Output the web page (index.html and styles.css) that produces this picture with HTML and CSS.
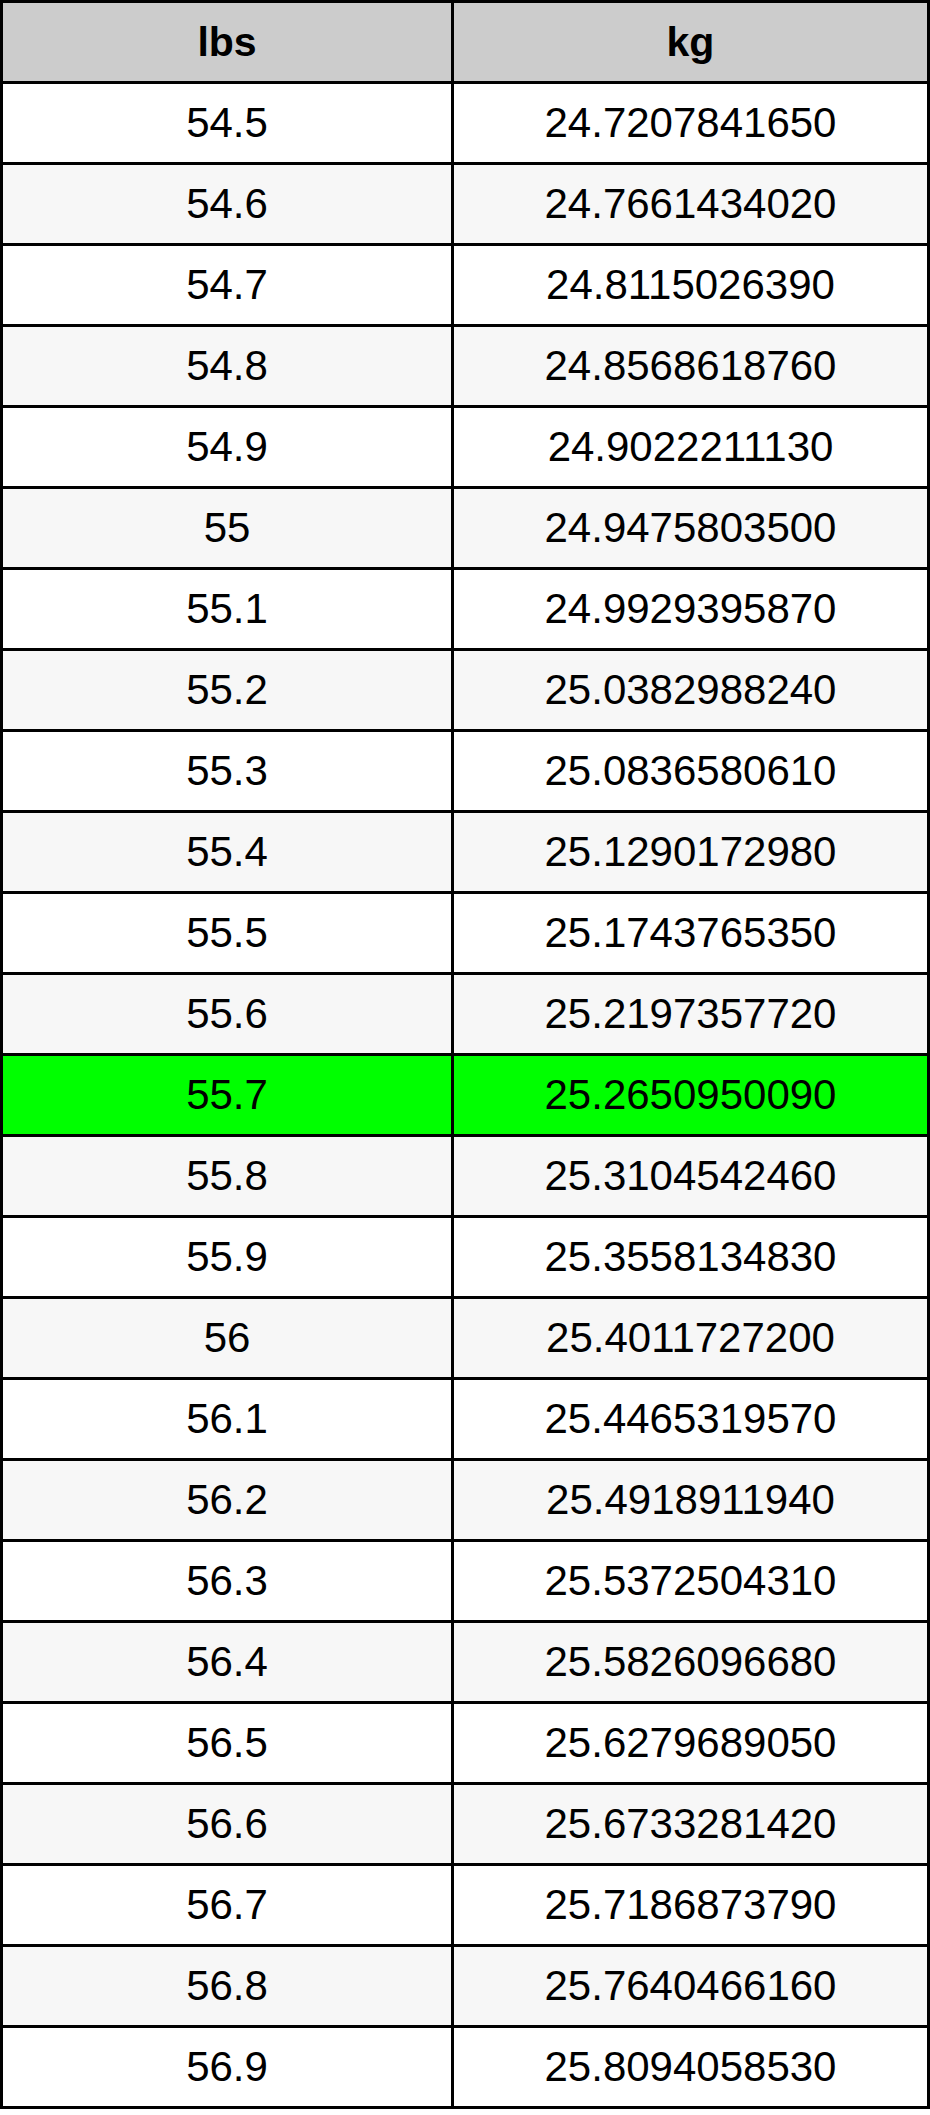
FILE: index.html
```html
<!DOCTYPE html>
<html>
<head>
<meta charset="utf-8">
<link rel="stylesheet" href="styles.css">
</head>
<body>
<table class="conv">
<thead>
<tr><th class="c1">lbs</th><th class="c2">kg</th></tr>
</thead>
<tbody>
<tr><td>54.5</td><td>24.7207841650</td></tr>
<tr class="alt"><td>54.6</td><td>24.7661434020</td></tr>
<tr><td>54.7</td><td>24.8115026390</td></tr>
<tr class="alt"><td>54.8</td><td>24.8568618760</td></tr>
<tr><td>54.9</td><td>24.9022211130</td></tr>
<tr class="alt"><td>55</td><td>24.9475803500</td></tr>
<tr><td>55.1</td><td>24.9929395870</td></tr>
<tr class="alt"><td>55.2</td><td>25.0382988240</td></tr>
<tr><td>55.3</td><td>25.0836580610</td></tr>
<tr class="alt"><td>55.4</td><td>25.1290172980</td></tr>
<tr><td>55.5</td><td>25.1743765350</td></tr>
<tr class="alt"><td>55.6</td><td>25.2197357720</td></tr>
<tr class="hl"><td>55.7</td><td>25.2650950090</td></tr>
<tr class="alt"><td>55.8</td><td>25.3104542460</td></tr>
<tr><td>55.9</td><td>25.3558134830</td></tr>
<tr class="alt"><td>56</td><td>25.4011727200</td></tr>
<tr><td>56.1</td><td>25.4465319570</td></tr>
<tr class="alt"><td>56.2</td><td>25.4918911940</td></tr>
<tr><td>56.3</td><td>25.5372504310</td></tr>
<tr class="alt"><td>56.4</td><td>25.5826096680</td></tr>
<tr><td>56.5</td><td>25.6279689050</td></tr>
<tr class="alt"><td>56.6</td><td>25.6733281420</td></tr>
<tr><td>56.7</td><td>25.7186873790</td></tr>
<tr class="alt"><td>56.8</td><td>25.7640466160</td></tr>
<tr class="last"><td>56.9</td><td>25.8094058530</td></tr>
</tbody>
</table>
</body>
</html>
```
FILE: styles.css
```css
html, body {
  margin: 0;
  padding: 0;
  background: #ffffff;
}
.conv {
  width: 930px;
  border: 3px solid #000;
  border-collapse: separate;
  border-spacing: 0;
  table-layout: fixed;
  font-family: "Liberation Sans", Arial, sans-serif;
  font-size: 42px;
  color: #000;
}
.conv th, .conv td {
  height: 78px;
  padding: 0;
  text-align: center;
  vertical-align: middle;
  border-bottom: 3px solid #000;
  box-sizing: content-box;
}
.conv th {
  background: #cccccc;
  font-weight: bold;
  font-size: 41px;
}
.conv th.c1 {
  width: 448px;
}
.conv th:first-child, .conv td:first-child {
  border-right: 3px solid #000;
}
.conv tr.alt td {
  background: #f7f7f7;
}
.conv tr.hl td {
  background: #00ff00;
}
.conv tr.last td {
  border-bottom: 0;
}
```
